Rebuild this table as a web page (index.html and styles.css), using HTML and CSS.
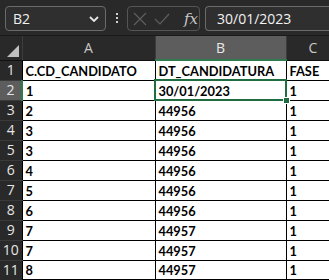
FILE: index.html
```html
<!DOCTYPE html>
<html>
<head>
<meta charset="utf-8">
<link rel="stylesheet" href="styles.css">
</head>
<body>
<div class="toolbar">
  <div class="namebox">
    <span class="name">B2</span>
    <svg class="chev" width="10" height="6" viewBox="0 0 10 6"><path d="M1 1 L5 5 L9 1" fill="none" stroke="#e6e6e6" stroke-width="1.8"/></svg>
  </div>
  <div class="dots"><i></i><i></i><i></i></div>
  <div class="fnbox">
    <svg width="16" height="16" viewBox="0 0 16 16"><path d="M2 2 L14 14 M14 2 L2 14" stroke="#5e5e5e" stroke-width="1.2"/></svg>
    <svg width="16" height="16" viewBox="0 0 16 16"><path d="M1 8 L6 13 L15 3" fill="none" stroke="#5e5e5e" stroke-width="1.2"/></svg>
    <span class="fx">fx</span>
  </div>
  <div class="formula">30/01/2023</div>
</div>
<table class="sheet">
  <colgroup><col class="c0"><col class="ca"><col class="cb"><col class="cc"></colgroup>
  <tr class="hdr">
    <th class="corner"><span class="tri"></span></th>
    <th>A</th><th class="sel">B</th><th>C</th>
  </tr>
  <tr><th class="rh">1</th><td>C.CD_CANDIDATO</td><td>DT_CANDIDATURA</td><td>FASE</td></tr>
  <tr><th class="rh sel">2</th><td>1</td><td class="active">30/01/2023<span class="handle"></span></td><td>1</td></tr>
  <tr><th class="rh">3</th><td>2</td><td>44956</td><td>1</td></tr>
  <tr><th class="rh">4</th><td>3</td><td>44956</td><td>1</td></tr>
  <tr><th class="rh">5</th><td>3</td><td>44956</td><td>1</td></tr>
  <tr><th class="rh">6</th><td>4</td><td>44956</td><td>1</td></tr>
  <tr><th class="rh">7</th><td>5</td><td>44956</td><td>1</td></tr>
  <tr><th class="rh">8</th><td>6</td><td>44956</td><td>1</td></tr>
  <tr><th class="rh">9</th><td>7</td><td>44957</td><td>1</td></tr>
  <tr><th class="rh">10</th><td>7</td><td>44957</td><td>1</td></tr>
  <tr><th class="rh">11</th><td>8</td><td>44957</td><td>1</td></tr>
</table>
</body>
</html>
```
FILE: styles.css
```css
html, body { margin: 0; padding: 0; }
body {
  background: #1f1f1f;
  width: 329px;
  height: 280px;
  overflow: hidden;
  font-family: "Open Sans", "DejaVu Sans", sans-serif;
}
.toolbar {
  height: 36px;
  background: #292929;
  display: flex;
  align-items: flex-start;
  padding-top: 6px;
  box-sizing: border-box;
  border-bottom: 1px solid #1a1a1a;
}
.namebox {
  margin-left: 5px;
  width: 101px;
  height: 25px;
  box-sizing: border-box;
  border: 1px solid #6b6b6b;
  border-radius: 4px;
  background: #2f2f2f;
  display: flex;
  align-items: center;
  justify-content: space-between;
  padding: 0 6px 0 7px;
  color: #f0f0f0;
  font-size: 14px;
}
.dots {
  width: 21px;
  display: flex;
  flex-direction: column;
  align-items: center;
  gap: 2px;
  padding-top: 7px;
}
.dots i { display: block; width: 2px; height: 2px; background: #d0d0d0; }
.fnbox {
  width: 73px;
  height: 25px;
  box-sizing: border-box;
  border: 1px solid #555;
  border-radius: 4px;
  background: #2a2a2a;
  display: flex;
  align-items: center;
  gap: 6px;
  padding-left: 4px;
}
.fx {
  font-family: "DejaVu Serif", "Liberation Serif", serif;
  font-style: italic;
  color: #c8c8c8;
  font-size: 15px;
  margin-left: 8px;
}
.formula {
  margin-left: 5px;
  flex: 1;
  height: 25px;
  box-sizing: border-box;
  border: 1px solid #6b6b6b;
  border-right: none;
  border-radius: 4px 0 0 4px;
  background: #2f2f2f;
  color: #f2f2f2;
  font-size: 14px;
  line-height: 23px;
  padding-left: 11px;
}
.sheet {
  border-collapse: collapse;
  table-layout: fixed;
  width: 340px;
}
.c0 { width: 22px; }
.ca { width: 133px; }
.cb { width: 131px; }
.cc { width: 54px; }
tr { height: 20px; }
tr.hdr { height: 24px; }
.hdr th {
  background: #292929;
  color: #c8c8c8;
  font-weight: normal;
  font-size: 14px;
  line-height: 16px;
  padding: 0;
  border-right: 1px solid #3c3c3c;
  border-bottom: 1px solid #111;
}
.hdr th.sel {
  background: #5d5d5d;
  color: #e8e8e8;
  border-bottom: 2px solid #2f7a4f;
}
.corner { position: relative; }
.tri {
  position: absolute;
  right: 3px;
  bottom: 3px;
  width: 0; height: 0;
  border-left: 12px solid transparent;
  border-bottom: 12px solid #c0c0c0;
}
th.rh {
  background: #292929;
  color: #e6e6e6;
  font-weight: normal;
  font-size: 14px;
  line-height: 16px;
  padding: 0;
  text-align: center;
  border-bottom: 1px solid #3a3a3a;
}
th.rh.sel { background: #5d5d5d; border-right: 2px solid #2f7a4f; }
td {
  background: #fff;
  color: #000;
  font-family: Lato, "Liberation Sans", sans-serif;
  font-weight: bold;
  font-size: 12.8px;
  padding: 1px 0 0 3px;
  line-height: 16px;
  border: 1px solid #000;
  white-space: nowrap;
  overflow: hidden;
}
td.active {
  position: relative;
  overflow: visible;
  outline: 2px solid #1e6e42;
  outline-offset: -1px;
}
.handle {
  position: absolute;
  right: -4px;
  bottom: -4px;
  width: 5px;
  height: 5px;
  background: #1e6e42;
  border: 1px solid #fff;
}
tr:last-child td { border-bottom: 2px solid #000; }
```
